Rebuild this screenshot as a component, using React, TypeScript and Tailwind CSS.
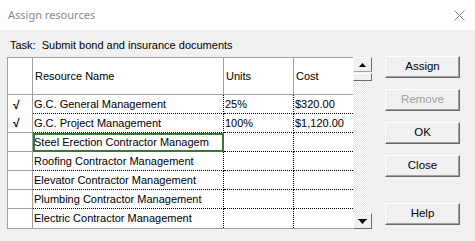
import React from "react";

const rows: { check: boolean; name: string; units: string; cost: string }[] = [
  { check: true, name: "G.C. General Management", units: "25%", cost: "$320.00" },
  { check: true, name: "G.C. Project Management", units: "100%", cost: "$1,120.00" },
  { check: false, name: "Steel Erection Contractor Managem", units: "", cost: "" },
  { check: false, name: "Roofing Contractor Management", units: "", cost: "" },
  { check: false, name: "Elevator Contractor Management", units: "", cost: "" },
  { check: false, name: "Plumbing Contractor Management", units: "", cost: "" },
  { check: false, name: "Electric Contractor Management", units: "", cost: "" },
];

function Btn({ label, disabled, className }: { label: string; disabled?: boolean; className?: string }) {
  return (
    <div
      className={
        "w-[75px] h-[22px] flex items-center justify-center bg-[#f0f0f0] border border-t-white border-l-white border-r-[#696969] border-b-[#696969] shadow-[inset_-1px_-1px_0_#a0a0a0] text-[11.5px] " +
        (disabled ? "text-[#a0a0a0] " : "text-black ") +
        (className ?? "")
      }
    >
      {label}
    </div>
  );
}

export default function App() {
  return (
    <div
      className="w-[475px] h-[241px] bg-[#f0f0f0] flex flex-col overflow-hidden"
      style={{ fontFamily: '"Liberation Sans", Arial, sans-serif' }}
    >
      {/* title bar */}
      <div className="h-[30px] bg-white flex items-center justify-between pl-[8px] pr-[9px] shrink-0">
        <span className="text-[11px] text-[#8a8a8a]" style={{ fontFamily: '"Noto Sans", sans-serif' }}>
          Assign resources
        </span>
        <svg width="11" height="11" viewBox="0 0 11 11" className="mr-[1px]">
          <path d="M0.5 0.5 L10.5 10.5 M10.5 0.5 L0.5 10.5" stroke="#8a8a8a" strokeWidth="1" fill="none" />
        </svg>
      </div>

      {/* body */}
      <div className="flex pl-[7px] pt-[8px]">
        <div className="flex flex-col w-[365px]">
          <div className="h-[14px] flex items-center pl-[3px] text-[11px] text-black whitespace-pre mb-[5px]">
            Task:  Submit bond and insurance documents
          </div>
          <div className="flex">
            {/* grid */}
            <div className="w-[346px] bg-white border-l border-t border-b border-[#a0a0a0] text-[11px] text-black">
              {/* header */}
              <div className="flex h-[37px] border-b border-[#a0a0a0]">
                <div className="w-[25px] border-r border-[#a0a0a0]" />
                <div className="w-[191px] border-r border-[#a0a0a0] flex items-center pl-[2px]">Resource Name</div>
                <div className="w-[70px] border-r border-[#a0a0a0] flex items-center pl-[2px]">Units</div>
                <div className="w-[59px] flex items-center pl-[2px]">Cost</div>
              </div>
              {rows.map((r, i) => {
                const last = i === rows.length - 1;
                const db = last ? "" : "border-b border-dotted border-b-black ";
                return (
                  <div key={i} className="flex h-[19px]">
                    <div
                      className={
                        "w-[25px] border-r border-r-[#a0a0a0] flex items-center pl-[5px] font-bold text-[12px] " +
                        (last || i === 0 ? "" : "border-b border-b-[#a0a0a0]")
                      }
                    >
                      {r.check ? "√" : ""}
                    </div>
                    <div
                      className={
                        "w-[191px] border-r border-dotted border-r-black flex items-center pl-[1px] whitespace-nowrap overflow-hidden " +
                        db +
                        (i === 2 ? "outline-2 -outline-offset-2 outline-[#357a2e]" : "")
                      }
                    >
                      {r.name}
                    </div>
                    <div className={"w-[70px] border-r border-dotted border-r-black flex items-center pl-[1px] " + db}>
                      {r.units}
                    </div>
                    <div className={"w-[59px] flex items-center pl-[1px] " + db}>{r.cost}</div>
                  </div>
                );
              })}
            </div>
            {/* scrollbar */}
            <div className="w-[19px] flex flex-col bg-[repeating-conic-gradient(#e4e4e4_0%_25%,#ffffff_0%_50%)] bg-[length:2px_2px]">
              <div className="h-[15px] bg-[#f0f0f0] border border-t-white border-l-white border-r-[#696969] border-b-[#a0a0a0] flex items-center justify-center">
                <svg width="7" height="4" viewBox="0 0 7 4">
                  <path d="M3.5 0 L7 4 L0 4 Z" fill="black" />
                </svg>
              </div>
              <div className="h-[8px] bg-[#f0f0f0] border border-t-white border-l-white border-r-[#696969] border-b-[#696969] mt-[1px]" />
              <div className="flex-1" />
              <div className="h-[16px] bg-[#f0f0f0] border border-t-white border-l-white border-r-[#696969] border-b-[#696969] flex items-center justify-center">
                <svg width="9" height="5" viewBox="0 0 9 5">
                  <path d="M0 0 H9 V1 H0 Z M1 1 H8 L4.5 5 Z" fill="black" />
                </svg>
              </div>
            </div>
          </div>
        </div>

        {/* buttons */}
        <div className="flex flex-col ml-[13px] mt-[18px]">
          <Btn label="Assign" />
          <Btn label="Remove" disabled className="mt-[11px]" />
          <Btn label="OK" className="mt-[11px]" />
          <Btn label="Close" className="mt-[11px]" />
          <Btn label="Help" className="mt-[26px]" />
        </div>
      </div>
    </div>
  );
}
